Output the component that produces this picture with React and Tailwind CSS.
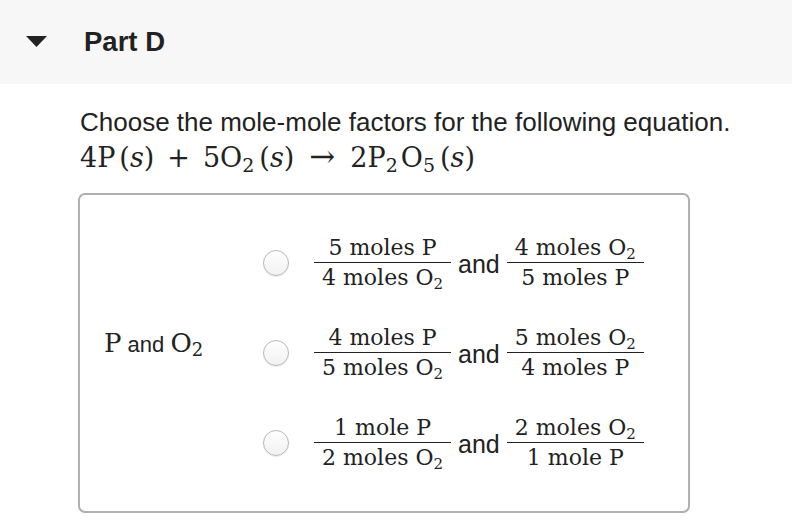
import React from 'react';

const O2 = () => (
  <>
    O<sub className="text-[15px]">2</sub>
  </>
);

function Frac({ num, den }) {
  return (
    <span className="inline-flex flex-col items-center font-['DejaVu_Serif',serif] text-[22px] text-[#222]">
      <span className="px-[8px] pb-[2px] leading-[24px] whitespace-nowrap">{num}</span>
      <span className="w-full h-0 border-t-[1.5px] border-[#222]" />
      <span className="px-[8px] pt-[3px] leading-[24px] whitespace-nowrap">{den}</span>
    </span>
  );
}

function Radio() {
  return (
    <span className="w-[26px] h-[26px] shrink-0 rounded-full border border-[#b8b8b8] bg-gradient-to-b from-white to-[#f1f1f1] shadow-[0_1px_1px_rgba(0,0,0,0.08)]" />
  );
}

const options = [
  {
    a: { num: '5 moles P', den: <>4 moles <O2 /></> },
    b: { num: <>4 moles <O2 /></>, den: '5 moles P' },
  },
  {
    a: { num: '4 moles P', den: <>5 moles <O2 /></> },
    b: { num: <>5 moles <O2 /></>, den: '4 moles P' },
  },
  {
    a: { num: '1 mole P', den: <>2 moles <O2 /></> },
    b: { num: <>2 moles <O2 /></>, den: '1 mole P' },
  },
];

export default function App() {
  return (
    <div className="w-[792px] h-[524px] bg-white text-[#222] font-['Liberation_Sans',Arial,sans-serif] overflow-hidden">
      {/* header */}
      <div className="h-[84px] bg-[#f7f7f7] flex items-center pl-[26px]">
        <svg width="21" height="11" viewBox="0 0 21 11" className="mt-[-2px]">
          <path d="M0 0 H21 L10.5 11 Z" fill="#222" />
        </svg>
        <span className="ml-[37px] text-[27.5px] font-bold leading-none">Part D</span>
      </div>

      <div className="pl-[80px] pt-[23px]">
        <p className="text-[26px] leading-[30px] whitespace-nowrap">Choose the mole-mole factors for the following equation.</p>
        <div className="mt-[2px] font-['DejaVu_Serif',serif] text-[27px] leading-[34px] whitespace-nowrap">
          4P<span className="ml-[4px]">(</span><i>s</i>)<span className="mx-[13px]">+</span>5O<sub className="text-[19px] mr-[5px]">2</sub>(<i>s</i>)
          <span className="mx-[15px] text-[31px]">→</span>2P<sub className="text-[19px] mr-[3px]">2</sub>O<sub className="text-[19px] mr-[5px]">5</sub>(<i>s</i>)
        </div>

        <div className="mt-[18px] ml-[-2px] w-[612px] h-[320px] border-2 border-[#b0b0b0] rounded-[7px] flex items-center">
          <div className="w-[183px] pl-[24px] pb-[20px] text-[22px] whitespace-nowrap">
            <span className="font-['DejaVu_Serif',serif] text-[26px]">P</span> and{' '}
            <span className="font-['DejaVu_Serif',serif] text-[26px]">
              O<sub className="text-[18px]">2</sub>
            </span>
          </div>
          <div className="flex flex-col">
            {options.map((o, i) => (
              <div key={i} className="h-[90px] flex items-center">
                <Radio />
                <div className="ml-[25px] flex items-center">
                  <Frac num={o.a.num} den={o.a.den} />
                  <span className="mx-[7px] mt-[2px] text-[25px] leading-[24px]">and</span>
                  <Frac num={o.b.num} den={o.b.den} />
                </div>
              </div>
            ))}
          </div>
        </div>
      </div>
    </div>
  );
}
